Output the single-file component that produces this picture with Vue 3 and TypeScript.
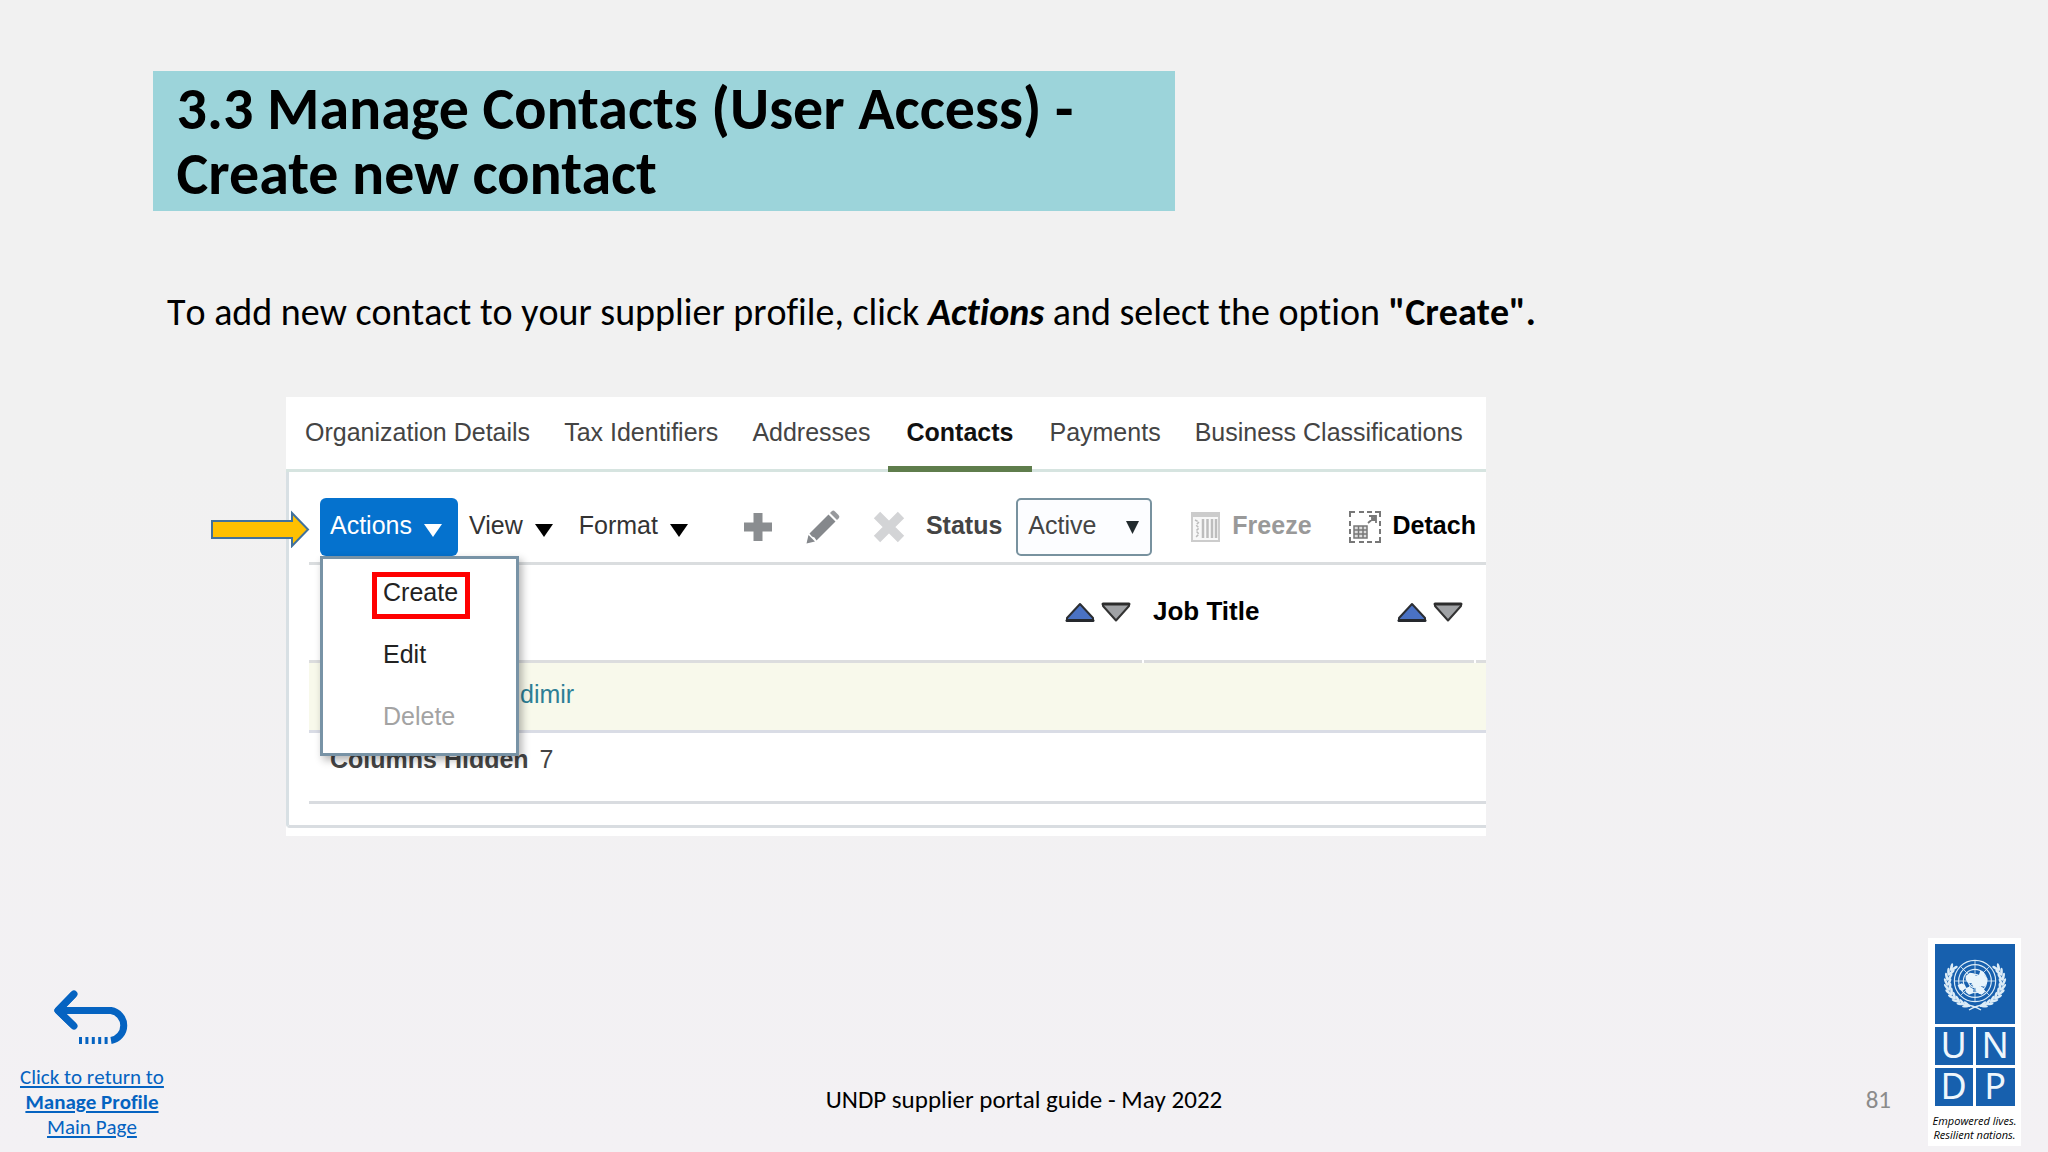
<script setup lang="ts">
import { ref } from 'vue'

interface Tab {
  label: string
  active?: boolean
}

const tabs: Tab[] = [
  { label: 'Organization Details' },
  { label: 'Tax Identifiers' },
  { label: 'Addresses' },
  { label: 'Contacts', active: true },
  { label: 'Payments' },
  { label: 'Business Classifications' },
]

const status = ref('Active')

interface Leaf {
  x: number
  y: number
  angle: number
}

// Two rows of leaves follow the olive branch on each side of the globe.
const leaves: Leaf[] = []
for (let i = 0; i < 10; i++) {
  const deg = 108 + i * 12
  const rad = (deg * Math.PI) / 180
  leaves.push({ x: 120 + 87 * Math.cos(rad), y: 114 + 76 * Math.sin(rad), angle: deg + 66 })
  leaves.push({ x: 120 + 77 * Math.cos(rad), y: 114 + 70 * Math.sin(rad), angle: deg + 112 })
}
const letters = ['U', 'N', 'D', 'P']
</script>

<template>
  <main class="slide">
    <h1 class="title">3.3 Manage Contacts (User Access) -<br />Create new contact</h1>
    <p class="lead">
      To add new contact to your supplier profile, click <em>Actions</em> and select the option
      <strong>"Create".</strong>
    </p>

    <section class="shot">
      <svg class="pointer" width="100" height="38" viewBox="0 0 100 38" aria-hidden="true">
        <path d="M2 11H82V3L98 19.500 82 36V28H2Z" fill="#ffc000" stroke="#41719c" stroke-width="2" />
      </svg>

      <nav class="tabs">
        <a v-for="t in tabs" :key="t.label" href="#" :class="['tab', { active: t.active }]">{{ t.label }}</a>
      </nav>

      <div class="panel">
        <div class="toolbar">
          <div class="dropdown">
            <button class="menu-btn primary" type="button">
              Actions
              <svg width="18" height="13" viewBox="0 0 18 13"><path d="M0 0H18L9 13Z" fill="#fff" /></svg>
            </button>
            <div class="menu">
              <button class="item" type="button">Create</button>
              <button class="item" type="button">Edit</button>
              <button class="item" type="button" disabled>Delete</button>
              <span class="highlight"></span>
            </div>
          </div>
          <button class="menu-btn view" type="button">
            View
            <svg width="18" height="13" viewBox="0 0 18 13"><path d="M0 0H18L9 13Z" fill="#000" /></svg>
          </button>
          <button class="menu-btn format" type="button">
            Format
            <svg width="18" height="13" viewBox="0 0 18 13"><path d="M0 0H18L9 13Z" fill="#000" /></svg>
          </button>
          <div class="icons">
            <button type="button" aria-label="Add">
              <svg width="30" height="30" viewBox="0 0 30 30"><path d="M10.500 1H19.500V10.500H29V19.500H19.500V29H10.500V19.500H1V10.500H10.500Z" fill="#8a8d90" /></svg>
            </button>
            <button type="button" aria-label="Edit">
              <svg width="34" height="34" viewBox="0 0 34 34">
                <path d="M0.500 33.500L2.500 25 9 31.500Z" fill="#85888c" />
                <path d="M3.500 23.500L22.500 4.500 29.500 11.500 10.500 30.500 8.500 27.500 6 26.500Z" fill="#85888c" />
                <path d="M24 3L26 1Q27.500 0 29 1.500L32.500 5Q34 6.500 33 8L31 10Z" fill="#97999c" />
              </svg>
            </button>
            <button type="button" aria-label="Delete" disabled>
              <svg width="32" height="32" viewBox="0 0 32 32"><path d="M4 4L28 28M28 4L4 28" stroke="#d3d4d6" stroke-width="9" /></svg>
            </button>
          </div>
          <label class="status" for="status">Status</label>
          <div class="select">
            <select id="status" v-model="status">
              <option>Active</option>
              <option>Inactive</option>
            </select>
            <svg width="13" height="13" viewBox="0 0 13 13" aria-hidden="true"><path d="M0 0H13L6.500 13Z" fill="#222b2e" /></svg>
          </div>
          <button class="tool freeze" type="button" disabled>
            <svg width="29" height="30" viewBox="0 0 29 30">
              <path d="M1 1H28V29H1Z" fill="#f8f8f8" stroke="#ccc" stroke-width="2" />
              <path d="M1 3H28" stroke="#ccc" stroke-width="4" />
              <path d="M12 7V26M16.500 7V26M21 7V26M25 7V26" stroke="#bdbdbd" stroke-width="2.500" />
              <path d="M4 8l4 2-3 3 3 3-3 3 3 3-3 3" fill="none" stroke="#bbb" stroke-width="1.500" stroke-dasharray="3 1.500" />
            </svg>
            <span>Freeze</span>
          </button>
          <button class="tool detach" type="button">
            <svg width="32" height="32" viewBox="0 0 32 32">
              <path d="M1 6V1H6M10 1H15M18 1H23M26 1H31V6M31 10V15M31 18V23M31 26V31H26M23 31H18M15 31H10M6 31H1V26M1 23V18M1 15V10" fill="none" stroke="#777" stroke-width="2" />
              <path d="M5 15H18V27H5ZM5 19H18M5 23H18M9.500 15V27M14 15V27" fill="#ddd" stroke="#777" stroke-width="1.500" />
              <path d="M19 12L26 6M20 5H27V12M23 5V9H27" fill="none" stroke="#777" stroke-width="1.800" />
            </svg>
            <span>Detach</span>
          </button>
        </div>

        <table class="grid">
          <thead>
            <tr>
              <th v-for="(c, i) in ['', 'Job Title', '']" :key="i" :class="'c' + i">
                <div class="head">
                  <span>{{ c }}</span>
                  <svg v-if="i < 2" width="66" height="22" viewBox="0 0 66 22" aria-hidden="true">
                    <path d="M15 3L28 17V19.500H2V17Z" fill="#4a72c4" stroke="#2b2e33" stroke-width="2" stroke-linejoin="round" />
                    <path d="M2 19.500H28" stroke="#25282d" stroke-width="3" stroke-linecap="round" />
                    <path d="M38 3V5L51 19.500 64 5V3Z" fill="#a0a2a5" stroke="#333" stroke-width="2" stroke-linejoin="round" />
                    <path d="M38 3H64" stroke="#2c2c2c" stroke-width="3" stroke-linecap="round" />
                  </svg>
                </div>
              </th>
            </tr>
          </thead>
          <tbody>
            <tr>
              <td><a href="#">dimir</a></td>
              <td></td>
              <td></td>
            </tr>
          </tbody>
        </table>
        <p class="hidden-cols"><b>Columns Hidden</b> <span>7</span></p>
      </div>
    </section>

    <footer class="footer">
      <a class="back" href="#">
        <svg width="76" height="58" viewBox="0 0 76 58" aria-hidden="true">
          <path d="M20 5L4 21.500 20 37M4 21.500H57A15.200 15.200 0 0 1 57 51.500" fill="none" stroke="#0563c1" stroke-width="7" stroke-linejoin="round" />
          <path d="M20 5L4 21.500 20 37" fill="none" stroke="#0563c1" stroke-width="7" stroke-linecap="round" stroke-linejoin="round" />
          <path d="M25 51.500H56" stroke="#0563c1" stroke-width="7" stroke-dasharray="3 3.400" />
        </svg>
        <span>Click to return to<br /><b>Manage Profile</b><br />Main Page</span>
      </a>
      <p class="caption">UNDP supplier portal guide - May 2022</p>
      <div class="corner">
        <span class="page">81</span>
        <div class="logo">
          <svg class="emblem" viewBox="0 0 240 240" aria-hidden="true">
            <rect width="240" height="240" fill="#1760ae" />
            <g fill="none" stroke="#dcecf7" stroke-width="3.500">
              <circle cx="120" cy="111" r="62" />
              <circle cx="120" cy="111" r="49" />
              <circle cx="120" cy="111" r="35" />
              <circle cx="120" cy="111" r="20" />
              <path d="M120 49V173M58 111H182M76 67L164 155M164 67L76 155" stroke-width="2.500" />
            </g>
            <g fill="#e8f4fb">
              <path d="M92 96l12-10 12 2 6 8 10-4 4-12 10 4 4 12 8 8-2 14-8 10-12-2-8 6-14-4-4-10-12-2-6-10z" />
              <path d="M122 132l14-6 10 6 4 12-10 8-10-4-8-6z" />
              <path d="M92 132l12-4 12 8-2 12-12 4-10-8z" />
              <path d="M68 124l12-6 10 5 3 9-10 9-9-4z" />
            </g>
            <g fill="#dcecf7">
              <g v-for="s in [1, -1]" :key="s" :transform="s < 0 ? 'translate(240 0) scale(-1 1)' : undefined">
                <ellipse v-for="(l, i) in leaves" :key="i" rx="12" ry="4" :transform="`translate(${l.x} ${l.y}) rotate(${l.angle})`" />
                <path d="M138 198Q116 184 84 180" fill="none" stroke="#dcecf7" stroke-width="4" />
              </g>
            </g>
          </svg>
          <div class="tiles">
            <span v-for="l in letters" :key="l">{{ l }}</span>
          </div>
          <p class="tagline">Empowered lives.<br />Resilient nations.</p>
        </div>
      </div>
    </footer>
  </main>
</template>

<style>
body {
  margin: 0;
}
</style>

<style scoped>
* {
  box-sizing: border-box;
}
.slide {
  display: flex;
  flex-direction: column;
  min-height: 100vh;
  background: linear-gradient(#f1f1f1 40%, #f3f1f4);
  font-family: Carlito, Lato, sans-serif;
  font-kerning: none;
  font-variant-ligatures: none;
  color: #000;
}
button {
  border: 0;
  padding: 0;
  background: none;
  font: inherit;
  color: inherit;
}
svg {
  display: block;
  flex: none;
}
p {
  margin: 0;
}
.title {
  width: 49.9%;
  margin: 71px 0 0 7.45%;
  padding: 5px 24px;
  background: #9cd4da;
  font-size: 60px;
  font-kerning: auto;
  line-height: 65px;
}
.lead {
  margin: 78px 0 0 167px;
  font-size: 38px;
  line-height: 46px;
}
.lead em {
  font-weight: bold;
}
.shot {
  position: relative;
  width: 58.6%;
  margin: 62px 0 0 286px;
  padding-bottom: 8px;
  background: #fff;
  font-family: "Liberation Sans", Arial, sans-serif;
  font-size: 25px;
  font-kerning: auto;
}
.pointer {
  position: absolute;
  left: -76px;
  top: 113px;
}
.tabs {
  display: flex;
  height: 75px;
  padding-left: 2px;
  border-bottom: 3px solid #d6e4e0;
}
.tab {
  height: 75px;
  padding: 0 17px;
  line-height: 70px;
  color: #444;
  text-decoration: none;
  white-space: nowrap;
}
.tab.active {
  padding: 0 19px;
  border-bottom: 6px solid #5f7d4c;
  color: #111;
  font-weight: bold;
}
.panel {
  padding: 0 0 21px 20px;
  border-left: 3px solid #d8e0e4;
  border-bottom: 3px solid #d9dde1;
  border-bottom-left-radius: 4px;
}
.toolbar {
  display: flex;
  align-items: center;
  padding: 26px 0 6px 11px;
  border-bottom: 3px solid #dadddf;
  color: #333;
  white-space: nowrap;
}
.dropdown {
  position: relative;
}
.menu-btn {
  display: flex;
  align-items: center;
  gap: 12px;
  height: 58px;
  padding-bottom: 4px;
}
.menu-btn svg {
  margin-top: 10px;
}
.primary {
  padding: 0 16px 4px 10px;
  border-radius: 6px;
  background: #0572ce;
  color: #fff;
}
.view {
  margin-left: 11px;
}
.format {
  margin-left: 26px;
}
.menu {
  position: absolute;
  z-index: 1;
  left: 0;
  top: 58px;
  display: flex;
  flex-direction: column;
  width: 199px;
  height: 200px;
  padding-top: 2px;
  border: 3px solid #7893a6;
  background: #fff;
  box-shadow: 3px 4px 8px rgba(0, 0, 0, 0.3);
}
.item {
  height: 62px;
  padding-left: 60px;
  text-align: left;
  color: #222;
}
.item:disabled {
  color: #a3a3a3;
}
.highlight {
  position: absolute;
  left: 49px;
  top: 13px;
  width: 98px;
  height: 47px;
  border: 5px solid #f00;
}
.icons {
  display: flex;
  align-items: center;
  gap: 33px;
  margin-left: 55px;
}
.status {
  margin: 0 14px 0 21px;
  padding-bottom: 4px;
  font-weight: bold;
  color: #444;
}
.select {
  position: relative;
  width: 136px;
}
.select select {
  width: 100%;
  height: 58px;
  padding: 0 10px 4px;
  border: 2px solid #78929f;
  border-radius: 5px;
  background: #fcfdff;
  appearance: none;
  font: inherit;
  color: #444;
}
.select svg {
  position: absolute;
  right: 13px;
  top: 23px;
  pointer-events: none;
}
.tool {
  display: flex;
  align-items: center;
  gap: 12px;
  font-weight: bold;
}
.tool span {
  padding-bottom: 4px;
}
.freeze {
  margin-left: 39px;
  color: #999;
}
.detach {
  margin-left: 37px;
  color: #000;
}
.grid {
  width: 100%;
  table-layout: fixed;
  border-collapse: separate;
  border-spacing: 0;
}
.grid th,
.grid td {
  padding: 0;
  text-align: left;
}
.c0 {
  width: 835px;
}
.c1 {
  width: 332px;
}
.head {
  display: flex;
  align-items: center;
  justify-content: space-between;
  height: 98px;
  margin-right: 2px;
  padding: 0 11px 2px 9px;
  border-bottom: 3px solid #dcddde;
  font-size: 26px;
}
.c2 .head {
  margin-right: 0;
  padding: 0;
}
.grid td {
  height: 70px;
  padding-bottom: 4px;
  border-bottom: 3px solid #d9dce5;
  background: #f8f9eb;
}
.grid td a {
  padding-left: 211px;
  color: #2d7f96;
  text-decoration: none;
}
.hidden-cols {
  display: flex;
  gap: 11px;
  height: 71px;
  padding-left: 21px;
  border-bottom: 3px solid #d9dce0;
  line-height: 52px;
  color: #444;
}
.footer {
  display: grid;
  grid-template-columns: 1fr auto 1fr;
  align-items: end;
  margin-top: auto;
}
.back {
  display: flex;
  flex-direction: column;
  align-items: center;
  gap: 18px;
  justify-self: start;
  margin: 0 0 12px 20px;
  color: #0563c1;
  font-size: 21px;
  line-height: 25px;
  text-align: center;
}
.caption {
  padding-bottom: 37px;
  font-size: 25px;
  line-height: 30px;
}
.corner {
  display: flex;
  align-items: flex-end;
  justify-content: flex-end;
}
.page {
  padding: 0 37px 37px 0;
  font-size: 25px;
  line-height: 30px;
  color: #8b8b8b;
}
.logo {
  width: 93px;
  margin: 0 27px 6px 0;
  padding: 6px 0 4px;
  background: #fff;
}
.emblem {
  width: 80px;
  height: 80px;
  margin: 0 auto 3px;
}
.tiles {
  display: grid;
  grid-template-columns: 1fr 1fr;
  gap: 3px;
  width: 80px;
  margin: 0 auto;
}
.tiles span {
  height: 38px;
  background: #1760ae;
  color: #eef6fc;
  font-family: "Noto Sans", sans-serif;
  font-size: 36px;
  line-height: 36px;
  text-align: center;
}
.tagline {
  margin-top: 8px;
  font-family: "Open Sans", "Noto Sans", sans-serif;
  font-size: 11px;
  font-style: italic;
  font-weight: 500;
  line-height: 14px;
  text-align: center;
  white-space: nowrap;
}
</style>
